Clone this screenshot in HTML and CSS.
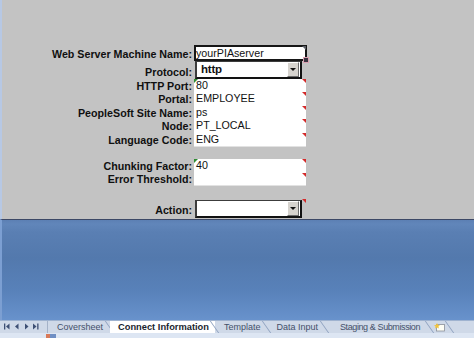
FILE: index.html
```html
<!DOCTYPE html>
<html lang="en">
  <head>
    <meta charset="UTF-8" />
    <title>Connect Information</title>
    <link rel="stylesheet" href="styles.css">
  </head>
  <body>
    <div class="sheet">
      <div class="form">
        <div class="row row-first">
          <span class="label">Web Server Machine Name:</span>
          <div class="cell active">yourPIAserver<i class="handle"></i><i class="mark-dark"></i></div>
        </div>
        <div class="row row-drop">
          <span class="label">Protocol:</span>
          <div class="select"><span class="value">http</span><b class="btn"></b></div>
        </div>
        <div class="row">
          <span class="label">HTTP Port:</span>
          <div class="cell">80<i class="mark-green"></i><i class="mark-red"></i></div>
        </div>
        <div class="row">
          <span class="label">Portal:</span>
          <div class="cell">EMPLOYEE<i class="mark-red"></i></div>
        </div>
        <div class="row">
          <span class="label">PeopleSoft Site Name:</span>
          <div class="cell">ps<i class="mark-red"></i></div>
        </div>
        <div class="row">
          <span class="label">Node:</span>
          <div class="cell">PT_LOCAL<i class="mark-red"></i></div>
        </div>
        <div class="row">
          <span class="label">Language Code:</span>
          <div class="cell">ENG<i class="mark-red"></i></div>
        </div>
        <div class="row row-gap"></div>
        <div class="row">
          <span class="label">Chunking Factor:</span>
          <div class="cell">40<i class="mark-green"></i><i class="mark-red"></i></div>
        </div>
        <div class="row">
          <span class="label">Error Threshold:</span>
          <div class="cell"><i class="mark-red"></i></div>
        </div>
        <div class="row row-gap"></div>
        <div class="row row-drop">
          <span class="label">Action:</span>
          <div class="select select-action"><span class="value"></span><b class="btn"></b><i class="mark-red out"></i></div>
        </div>
      </div>
    </div>
    <div class="desk"></div>
    <div class="tabbar">
      <div class="nav">
        <svg width="44" height="9" viewBox="0 0 44 9">
          <g fill="#3d4f73">
            <rect x="3" y="1.5" width="1.3" height="6" />
            <path d="M5 4.5 L8.5 1.5 L8.5 7.5 Z" />
            <path d="M14 4.5 L17.5 1.5 L17.5 7.5 Z" />
            <path d="M27.5 4.5 L24 1.5 L24 7.5 Z" />
            <path d="M35.5 4.5 L32 1.5 L32 7.5 Z" />
            <rect x="36.2" y="1.5" width="1.3" height="6" />
          </g>
        </svg>
      </div>
      <div class="tab tab-first">Coversheet</div>
      <div class="tab current">Connect Information</div>
      <div class="tab">Template</div>
      <div class="tab">Data Input</div>
      <div class="tab tab-wide">Staging &amp; Submission</div>
      <div class="tab tab-new">
        <svg width="12" height="10" viewBox="0 0 12 10">
          <rect x="2.5" y="2.5" width="8" height="6.5" fill="#fdfdf4" stroke="#8a8f99" stroke-width="0.8" />
          <path d="M3 1 L4 3 L6 3.3 L4.4 4.6 L4.9 6.6 L3 5.5 L1.1 6.6 L1.6 4.6 L0 3.3 L2 3 Z" fill="#f2c43c" />
        </svg>
      </div>
    </div>
    <div class="status"><i class="status-icon"></i></div>
  </body>
</html>
```

FILE: styles.css
```css
body {
  margin: 0;
  width: 474px;
  height: 338px;
  overflow: hidden;
  font-family: "Liberation Sans", Arial, sans-serif;
}
.sheet {
  height: 219px;
  background-color: #c3c3c3;
  border-left: 2px solid #b7c8e4;
  box-sizing: border-box;
}
.form {
  padding-top: 45px;
}
.row {
  display: grid;
  grid-template-columns: 190px 113px;
  column-gap: 2px;
  height: 13.4px;
}
.row-first {
  height: 16px;
}
.row-drop {
  height: 18px;
}
.label {
  align-self: end;
  text-align: right;
  font-size: 10.7px;
  font-weight: bold;
  line-height: 13.4px;
  color: #101010;
  white-space: nowrap;
}
.cell {
  position: relative;
  background-color: #fff;
  border-bottom: 1px solid #e2e2e2;
  box-sizing: border-box;
  width: 112px;
  padding-left: 2px;
  font-size: 10.7px;
  line-height: 13.4px;
  color: #111;
}
.cell.active {
  width: 113px;
  border: 2px solid #161616;
  line-height: 12px;
  padding-left: 0;
}
.handle {
  position: absolute;
  right: -4px;
  bottom: -4px;
  width: 4px;
  height: 4px;
  background-color: #3a3440;
  border: 1px solid #d8a0b0;
}
.mark-dark,
.mark-red,
.mark-green {
  position: absolute;
  top: 0;
  width: 0;
  height: 0;
  border-style: solid;
}
.mark-red {
  right: 0;
  border-width: 0 4px 4px 0;
  border-color: transparent #d42a2a transparent transparent;
}
.mark-dark {
  right: -1px;
  top: -1px;
  border-width: 0 4px 4px 0;
  border-color: transparent #5b5f66 transparent transparent;
}
.mark-green {
  left: 0;
  border-width: 4px 4px 0 0;
  border-color: #2e8c32 transparent transparent transparent;
}
.mark-red.out {
  right: -6px;
  top: -2px;
}
.select {
  position: relative;
  margin-left: 1px;
  width: 107px;
  box-sizing: border-box;
  background-color: #fff;
  border-top: 1px solid #3c3c3c;
  border-left: 2px solid #3c3c3c;
  border-right: 2px solid #121212;
  border-bottom: 2px solid #121212;
  display: flex;
  align-items: center;
  justify-content: space-between;
}
.value {
  padding-left: 4px;
  font-size: 11.5px;
  font-weight: bold;
  letter-spacing: -0.2px;
  color: #111;
  margin-top: -1px;
}
.btn {
  position: relative;
  width: 10px;
  height: 13px;
  margin-right: 1px;
  background-color: #d6d3ce;
  border-top: 1px solid #fff;
  border-left: 1px solid #fff;
  border-right: 1px solid #6c6c6c;
  border-bottom: 1px solid #6c6c6c;
}
.btn::after {
  content: "";
  position: absolute;
  left: 2px;
  top: 5px;
  border-style: solid;
  border-width: 3px 3px 0 3px;
  border-color: #111 transparent transparent transparent;
}
.desk {
  height: 100px;
  border-top: 1px solid #3c4866;
  border-left: 2px solid #7c9fd2;
  background: linear-gradient(#5c80b4 0, #6186ba 4px, #5a7fb3 12px, #5379ad 38%, #5881b9 70%, #6892cc 100%);
}
.tabbar {
  display: flex;
  height: 13px;
  background-color: #cfd9e8;
  border-top: 1px solid #9fb3d0;
  box-sizing: border-box;
  font-size: 9px;
  color: #44506a;
  line-height: 12px;
}
.nav {
  width: 46px;
  padding-left: 1px;
  padding-top: 1px;
  border-right: 1px solid #a4b2c8;
}
.tab {
  position: relative;
  padding: 0 7px 0 9px;
  white-space: nowrap;
}
.tab::after {
  content: "";
  position: absolute;
  right: 0;
  top: 0;
  bottom: 0;
  border-right: 1px solid #8fa2c0;
  transform: skewX(35deg);
}
.tab-first {
  padding-left: 9px;
}
.current {
  background-color: #fff;
  font-weight: bold;
  font-size: 9.3px;
  color: #1a1f2e;
  padding: 0 6px 0 8px;
}
.tab-wide {
  padding: 0 10px 0 15px;
  letter-spacing: -0.4px;
}
.tab-new {
  padding: 1px 4px 0 4px;
}
.status {
  height: 5px;
  background-color: #dde6f3;
  position: relative;
}
.status-icon {
  position: absolute;
  left: 46px;
  top: 1px;
  width: 10px;
  height: 4px;
  background: linear-gradient(90deg, #d87a5a 0, #d87a5a 40%, #6f8fc4 40%);
}
```
